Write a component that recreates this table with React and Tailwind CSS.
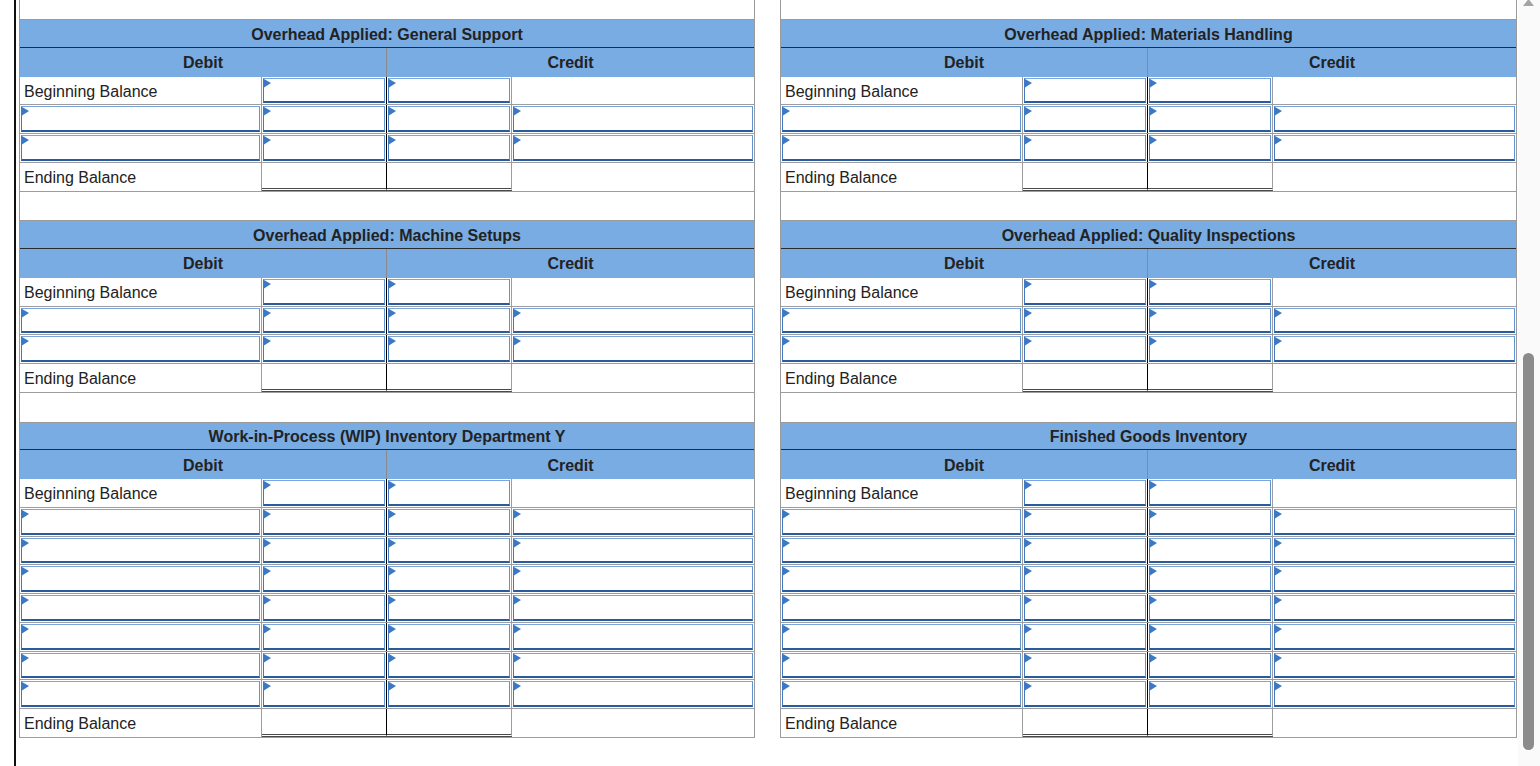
import React from "react";

const Tri = () => (
  <svg className="absolute left-0 top-0" width="7" height="9" viewBox="0 0 7 9">
    <polygon points="0,0 7,4 0,8.5" fill="#3b79c5" />
  </svg>
);

const Input = () => (
  <div className="relative h-full w-full bg-white border border-[#7aa6dd] border-l-[#4279c2] border-r-[#5f93d3] border-b-2 border-b-[#2a5b9c]">
    <Tri />
  </div>
);

const ROW = "h-[28.76px] grid grid-cols-[242px_124px_126px_1fr] border-b border-[#9d9d9d]";

const BegRow = () => (
  <div className={ROW}>
    <div className="border-r border-[#9d9d9d] pl-1 pt-[3px] flex items-center">Beginning Balance</div>
    <div className="p-px"><Input /></div>
    <div className="border-l border-l-black border-r border-r-[#9d9d9d] p-px"><Input /></div>
    <div />
  </div>
);

const InRow = () => (
  <div className={ROW}>
    <div className="border-r border-[#9d9d9d] p-px"><Input /></div>
    <div className="p-px"><Input /></div>
    <div className="border-l border-l-black border-r border-r-[#9d9d9d] p-px"><Input /></div>
    <div className="p-px"><Input /></div>
  </div>
);

const EndRow = () => (
  <div className={ROW}>
    <div className="border-r border-[#9d9d9d] pl-1 pt-[3px] flex items-center">Ending Balance</div>
    <div className="border-b-[3px] border-double border-b-[#4a4a4a]" />
    <div className="border-l border-l-black border-r border-r-[#9d9d9d] border-b-[3px] border-double border-b-[#4a4a4a]" />
    <div />
  </div>
);

const Section = ({ title, n }) => (
  <div className="flex flex-col">
    <div className="h-[28.76px] border-t border-t-[#9a9a9a] border-b border-b-[#2b2b2b] bg-[#79ace3] pt-[3px] flex items-center justify-center font-bold">
      {title}
    </div>
    <div className="h-[28.76px] grid grid-cols-[366px_1fr] bg-[#79ace3] font-bold">
      <div className="flex items-center justify-center pt-[2px]">Debit</div>
      <div className="border-l border-[#8a8a8a] flex items-center justify-center pt-[2px]">Credit</div>
    </div>
    <BegRow />
    {Array.from({ length: n }).map((_, i) => (
      <InRow key={i} />
    ))}
    <EndRow />
  </div>
);

const Table = ({ width, sections }) => (
  <div className={`${width} border-x border-[#9a9a9a] flex flex-col`}>
    <div className="h-[19px]" />
    <Section {...sections[0]} />
    <div className="h-[28.76px]" />
    <Section {...sections[1]} />
    <div className="h-[28.76px]" />
    <Section {...sections[2]} />
  </div>
);

const left = [
  { title: "Overhead Applied: General Support", n: 2 },
  { title: "Overhead Applied: Machine Setups", n: 2 },
  { title: "Work-in-Process (WIP) Inventory Department Y", n: 7 },
];
const right = [
  { title: "Overhead Applied: Materials Handling", n: 2 },
  { title: "Overhead Applied: Quality Inspections", n: 2 },
  { title: "Finished Goods Inventory", n: 7 },
];

export default function App() {
  return (
    <div className="relative w-[1540px] h-[766px] overflow-hidden bg-white font-['Liberation_Sans',Arial,sans-serif] text-[16px] text-[#222]">
      <div className="flex h-full pl-[14px]">
        <div className="w-[2px] h-full bg-[#111]" />
        <div className="ml-[3px] flex items-start gap-[25px]">
          <Table width="w-[736px]" sections={left} />
          <Table width="w-[737px]" sections={right} />
        </div>
      </div>
      <div className="absolute right-0 top-0 h-full w-[22px] bg-[#fafafa]">
        <svg className="absolute left-[5px] top-0" width="11" height="6" viewBox="0 0 11 6">
          <polygon points="5.5,-1 11,6 0,6" fill="#a3a3a3" />
        </svg>
        <div className="absolute left-[5px] top-[353px] w-[11px] h-[397px] rounded-full bg-[#8b8b8b]" />
      </div>
    </div>
  );
}
